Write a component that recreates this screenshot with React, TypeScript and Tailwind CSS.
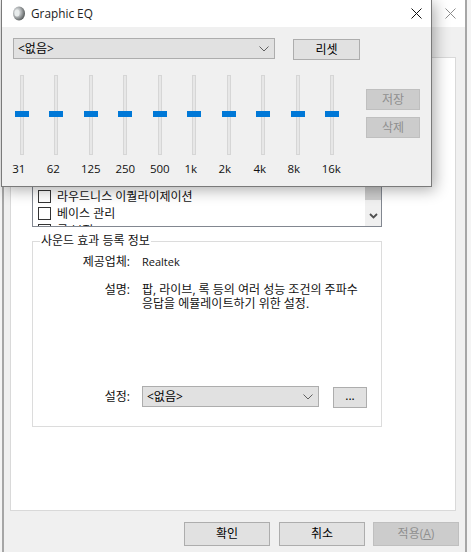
import type { ReactNode } from "react";

const FONT = "font-['Open_Sans','Noto_Sans_CJK_KR',sans-serif]";

interface Band {
  label: string;
  labelClass: string;
}

const BANDS: Band[] = [
  { label: "31", labelClass: "pr-[6px]" },
  { label: "62", labelClass: "pr-[6px]" },
  { label: "125", labelClass: "" },
  { label: "250", labelClass: "" },
  { label: "500", labelClass: "" },
  { label: "1k", labelClass: "pr-[7px]" },
  { label: "2k", labelClass: "pr-[8px]" },
  { label: "4k", labelClass: "pr-[7px]" },
  { label: "8k", labelClass: "pr-[8px]" },
  { label: "16k", labelClass: "pr-[2px]" },
];

function Chevron({ color = "#606060" }: { color?: string }) {
  return (
    <svg width="10" height="6" viewBox="0 0 10 6" fill="none">
      <path d="M0.5 0.5 L5 5 L9.5 0.5" stroke={color} strokeWidth="1" />
    </svg>
  );
}

function CloseIcon({ color }: { color: string }) {
  return (
    <svg width="11" height="11" viewBox="0 0 11 11" fill="none">
      <path d="M0.5 0.5 L10.5 10.5 M10.5 0.5 L0.5 10.5" stroke={color} strokeWidth="1" />
    </svg>
  );
}

function SpeakerIcon() {
  return (
    <svg width="14" height="15" viewBox="0 0 14 15">
      <defs>
        <radialGradient id="cone" cx="0.35" cy="0.4" r="0.7">
          <stop offset="0" stopColor="#f4f4f4" />
          <stop offset="0.45" stopColor="#b5b9bb" />
          <stop offset="1" stopColor="#4c5050" />
        </radialGradient>
      </defs>
      <ellipse cx="7" cy="7.5" rx="6" ry="7" fill="url(#cone)" />
      <ellipse cx="5" cy="7" rx="2.5" ry="3.5" fill="#e8ecec" />
    </svg>
  );
}

function Btn({ className, children }: { className: string; children: ReactNode }) {
  return (
    <button
      className={`flex items-center justify-center border border-[#adadad] bg-[#e1e1e1] text-[12px] text-black ${className}`}
    >
      {children}
    </button>
  );
}

function Combo({ className, text }: { className: string; text: string }) {
  return (
    <div
      className={`flex items-center justify-between border border-[#adadad] bg-[#e1e1e1] pl-[4px] pr-[5px] text-[12px] text-black ${className}`}
    >
      <span>{text}</span>
      <Chevron />
    </div>
  );
}

function Slider() {
  return (
    <div className="relative mx-auto h-[80px] w-[4px] border border-[#d6d6d6] bg-[#e7e7e7]">
      <div className="absolute left-[-6px] top-[35px] h-[6px] w-[14px] bg-[#0078d7]" />
    </div>
  );
}

function EqDialog() {
  return (
    <div className="absolute left-[1px] top-0 h-[187px] w-[431px] border border-t-0 border-[#7a7a7a] bg-[#f0f0f0] shadow-[3px_3px_14px_rgba(0,0,0,0.32)]">
      <div className="flex h-[27px] items-center bg-white pl-[10px] pr-[9px]">
        <SpeakerIcon />
        <span className="ml-[5px] text-[11.8px] text-[#222]">Graphic EQ</span>
        <span className="ml-auto flex">
          <CloseIcon color="#111" />
        </span>
      </div>
      <div className="flex items-start pl-[11px] pt-[11px]">
        <Combo className="h-[21px] w-[262px]" text="<없음>" />
        <Btn className="ml-[18px] mt-px h-[21px] w-[67px]">리셋</Btn>
      </div>
      <div className="flex items-start pl-[2.5px] pt-[15px]">
        <div className="flex">
          {BANDS.map((b) => (
            <div key={b.label} className="w-[34.5px]">
              <Slider />
              <div className={`mt-[6px] text-center text-[11.5px] leading-[16px] text-[#111] ${b.labelClass}`}>
                {b.label}
              </div>
            </div>
          ))}
        </div>
        <div className="ml-[16.5px] mt-[14px] flex flex-col gap-[7px]">
          <button className="h-[21px] w-[54px] border border-[#bfbfbf] bg-[#cccccc] text-[12px] text-[#8f8f8f]">
            저장
          </button>
          <button className="h-[21px] w-[54px] border border-[#bfbfbf] bg-[#cccccc] text-[12px] text-[#8f8f8f]">
            삭제
          </button>
        </div>
      </div>
    </div>
  );
}

function ListItem({ text }: { text: string }) {
  return (
    <div className="flex h-[17px] items-center pl-[5px]">
      <div className="h-[13px] w-[13px] shrink-0 border border-[#333] bg-white" />
      <span className="ml-[6px] text-[12px] text-[#111]">{text}</span>
    </div>
  );
}

function EffectList() {
  return (
    <div className="relative h-[130px] w-[350px] overflow-hidden border border-t-0 border-[#828790] bg-white pt-[91px]">
      <ListItem text="라우드니스 이퀄라이제이션" />
      <ListItem text="베이스 관리" />
      <ListItem text="룸 보정" />
      <div className="absolute bottom-0 right-0 flex h-full w-[16px] flex-col bg-[#f0f0f0]">
        <div className="flex-1 bg-[#cdcdcd]" />
        <div className="flex h-[26px] items-end justify-center pb-[7px]">
          <svg width="9" height="6" viewBox="0 0 9 6" fill="none">
            <path d="M1 1 L4.5 4.5 L8 1" stroke="#505050" strokeWidth="1.8" />
          </svg>
        </div>
      </div>
    </div>
  );
}

function InfoGroup() {
  return (
    <fieldset className="mt-[7px] h-[193px] w-[350px] border border-[#dcdcdc]">
      <legend className="ml-[7px] px-[1px] text-[12px] leading-[14px] text-[#111]">사운드 효과 등록 정보</legend>
      <div className="grid grid-cols-[97px_1fr] gap-x-[12px] text-[12px] leading-[14px] text-[#111]">
        <div className="mt-[7px] text-right">제공업체:</div>
        <div className="mt-[7px] text-[11px]">Realtek</div>
        <div className="mt-[14px] text-right">설명:</div>
        <div className="mt-[14px] h-[97px]">
          팝, 라이브, 록 등의 여러 성능 조건의 주파수
          <br />
          응답을 에뮬레이트하기 위한 설정.
        </div>
      </div>
      <div className="mt-[5px] flex items-center text-[12px] text-[#111]">
        <div className="w-[97px] text-right">설정:</div>
        <Combo className="ml-[12px] h-[21px] w-[177px]" text="<없음>" />
        <Btn className="ml-[14px] mt-[2px] h-[21px] w-[34px] pb-[4px]">...</Btn>
      </div>
    </fieldset>
  );
}

export default function App() {
  return (
    <div className={`relative flex h-[552px] w-[471px] overflow-hidden bg-[#f4f4f4] ${FONT}`}>
      <div className="ml-[2px] flex h-full w-[465px] flex-col border-x-2 border-[#a6a6a6] bg-[#f0f0f0]">
        <div className="flex h-[27px] shrink-0 items-center justify-end bg-white pr-[9px]">
          <CloseIcon color="#8c8c8c" />
        </div>
        <div className="ml-[6px] mt-[30px] h-[454px] w-[446px] shrink-0 border border-[#d9d9d9] bg-white pl-[21px] pt-[39px]">
          <EffectList />
          <InfoGroup />
        </div>
        <div className="ml-[180px] mt-[11px] flex gap-[9px]">
          <Btn className="h-[24px] w-[86px]">확인</Btn>
          <Btn className="h-[24px] w-[86px]">취소</Btn>
          <button className="ml-[-1px] h-[24px] w-[86px] border border-[#bfbfbf] bg-[#cccccc] text-[12px] text-[#8f8f8f]">
            적용(<span className="underline">A</span>)
          </button>
        </div>
      </div>
      <EqDialog />
    </div>
  );
}
